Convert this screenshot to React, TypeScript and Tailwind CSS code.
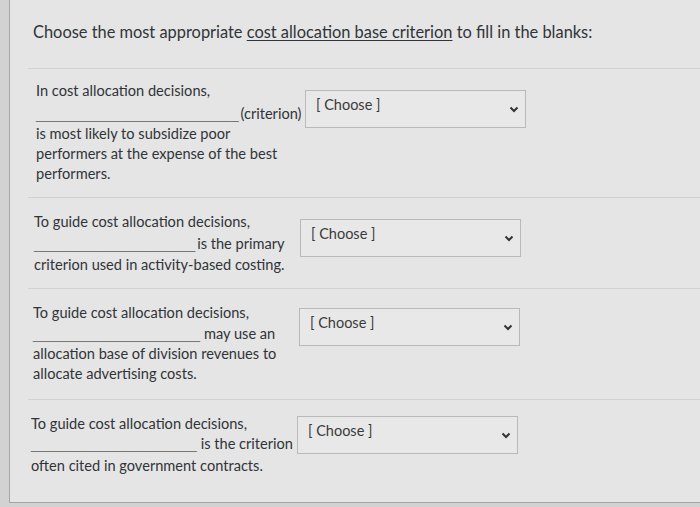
const font = { fontFamily: "Lato, 'Open Sans', sans-serif" };

// underscores in Liberation Sans are 0.556em wide, so count + size give the blank's width
function Blank({ n, size }: { n: number; size: string }) {
  return (
    <span
      className={`${size} whitespace-nowrap text-[#777]`}
      style={{ fontFamily: "'Liberation Sans', Arial, sans-serif" }}
    >
      {"_".repeat(n)}
    </span>
  );
}

function Choose({ top }: { top: string }) {
  return (
    <div
      className={`${top} flex h-[38px] w-[221px] shrink-0 items-start justify-between border border-[#b9b9b9] bg-[#e8e8e8] pl-[10px] pr-[6px]`}
    >
      <span className="pt-[4px] text-[14.5px] leading-[20px] text-[#3a3a3a]">[ Choose ]</span>
      <svg width="10" height="7" viewBox="0 0 10 7" className="mt-[15px]">
        <path d="M1.5 1.5 L5 5 L8.5 1.5" fill="none" stroke="#333" strokeWidth="2" />
      </svg>
    </div>
  );
}

function Divider() {
  return <div className="ml-[18px] border-t border-[#d2d2d2]" />;
}

export default function App() {
  return (
    <div className="h-[507px] w-[700px] overflow-hidden bg-[#d2d2d2]" style={font}>
      <div className="ml-[9px] h-[503px] border-b border-l border-[#a5a5a5] bg-[#e5e5e5] text-[#303438]">
        <div className="pl-[23px] pt-[20px] text-[16.4px] leading-[24px]">
          Choose the most appropriate <span className="underline underline-offset-2">cost allocation base criterion</span> to fill in the blanks:
        </div>
        <div className="mt-[24px]">
          <Divider />
        </div>

        {/* row 1 */}
        <div className="flex pb-[13px] pl-[26px] pt-[12px] text-[14.6px] leading-[20px]">
          <div className="w-[269px] shrink-0">
            <div>In cost allocation decisions,</div>
            <div className="mt-[3px] whitespace-nowrap">
              <Blank n={26} size="text-[14px]" />
              <span className="ml-[2px]">(criterion)</span>
            </div>
            <div>is most likely to subsidize poor</div>
            <div>performers at the expense of the best</div>
            <div>performers.</div>
          </div>
          <Choose top="mt-[9px]" />
        </div>
        <Divider />

        {/* row 2 */}
        <div className="flex pb-[13px] pl-[24px] pt-[14px] text-[14.6px] leading-[20px]">
          <div className="w-[266px] shrink-0">
            <div>To guide cost allocation decisions,</div>
            <div className="mt-[2px] whitespace-nowrap">
              <Blank n={21} size="text-[13.8px]" />
              <span className="ml-[2px]">is the primary</span>
            </div>
            <div>criterion used in activity-based costing.</div>
          </div>
          <Choose top="mt-[7px]" />
        </div>
        <Divider />

        {/* row 3 */}
        <div className="flex pb-[15px] pl-[23px] pt-[14px] text-[14.6px] leading-[20px]">
          <div className="w-[266px] shrink-0">
            <div>To guide cost allocation decisions,</div>
            <div className="mt-[1px] whitespace-nowrap">
              <Blank n={21} size="text-[14.3px]" />
              <span className="ml-[4px]">may use an</span>
            </div>
            <div>allocation base of division revenues to</div>
            <div>allocate advertising costs.</div>
          </div>
          <Choose top="mt-[5px]" />
        </div>
        <Divider />

        {/* row 4 */}
        <div className="flex pl-[21px] pt-[14px] text-[14.6px] leading-[20px]">
          <div className="w-[266px] shrink-0">
            <div>To guide cost allocation decisions,</div>
            <div className="whitespace-nowrap">
              <Blank n={21} size="text-[14.2px]" />
              <span className="ml-[4px]">is the criterion</span>
            </div>
            <div className="mt-[2px]">often cited in government contracts.</div>
          </div>
          <Choose top="mt-[2px]" />
        </div>
      </div>
    </div>
  );
}
